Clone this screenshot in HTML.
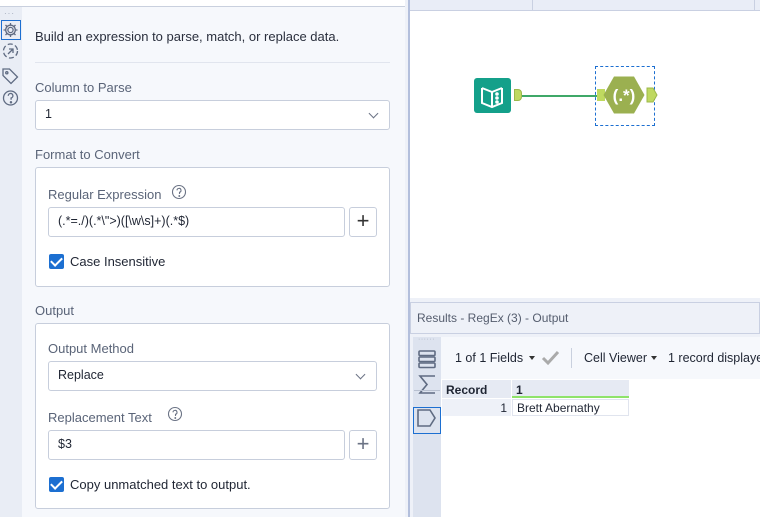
<!DOCTYPE html>
<html><head><meta charset="utf-8"><style>
*{box-sizing:border-box;margin:0;padding:0}
body{width:760px;height:517px;position:relative;overflow:hidden;background:#fff;font-family:"Liberation Sans",sans-serif;font-size:13px;color:#1f2533}
.a{position:absolute}
.lbl{position:absolute;color:#5a6478;font-size:13px}
.box{position:absolute;background:#fff;border:1px solid #c7cedc;border-radius:3px}
.inp{position:absolute;background:#fff;border:1px solid #c7cedc;border-radius:3px;padding-left:9px;line-height:27px;font-size:12.5px}
.chev{position:absolute;right:12px;top:9px;width:7px;height:7px;border-right:1.3px solid #6b7385;border-bottom:1.3px solid #6b7385;transform:rotate(45deg)}
.plus{position:absolute;background:#fff;border:1px solid #c7cedc;border-radius:3px;text-align:center;font-size:22px;line-height:26px;color:#333}
.cb{position:absolute;width:15px;height:15px;background:#1c6fd1;border-radius:2px}
.cb:after{content:"";position:absolute;left:4px;top:1px;width:5px;height:9px;border-right:2px solid #fff;border-bottom:2px solid #fff;transform:rotate(45deg)}
</style></head><body>
<div class="a" style="left:0;top:0;width:405px;height:7px;background:#fff;border-bottom:1px solid #c9d0de"></div>
<div class="a" style="left:0;top:7px;width:22px;height:510px;background:#e9edf5"></div>
<div class="a" style="left:22px;top:7px;width:383px;height:510px;background:#f6f8fc"></div>
<div class="a" style="left:4px;top:9px;color:#9aa3b5;font-size:8px;letter-spacing:1px">···</div>
<div class="a" style="left:1px;top:20px;width:20px;height:20px;border:1px solid #1c6fd1"></div>
<svg class="a" style="left:0;top:0" width="22" height="110" fill="none" stroke="#5f6b82" stroke-width="1.3">
<circle cx="10.5" cy="30" r="2.6"/><path d="M10.5 23v2.5M10.5 34.5V37M3.5 30H6M15 30h2.5M5.5 25l1.8 1.8M13.7 33.2l1.8 1.8M5.5 35l1.8-1.8M13.7 26.8l1.8-1.8"/><circle cx="10.5" cy="30" r="4.8"/>
<circle cx="10.5" cy="51" r="7" stroke-dasharray="5 2.5"/><path d="M8 54l5-5M9 49h4v4"/>
<path d="M3 69v6.5l8 8 6.5-6.5-8-8z"/><circle cx="6.8" cy="72.8" r="1.1"/>
<circle cx="10.5" cy="98" r="7"/><path d="M8.3 95.8a2.3 2.3 0 1 1 2.8 2.2v1.8"/><circle cx="11" cy="102.3" r=".6" fill="#5f6b82"/>
</svg>
<div class="a" style="left:35px;top:29px;font-size:13px;color:#2a2f3d">Build an expression to parse, match, or replace data.</div>
<div class="a" style="left:35px;top:62px;width:355px;height:1px;background:#e1e5ee"></div>
<div class="lbl" style="left:35px;top:80px">Column to Parse</div>
<div class="inp" style="left:35px;top:100px;width:355px;height:30px">1<div class="chev"></div></div>
<div class="lbl" style="left:35px;top:147px">Format to Convert</div>
<div class="box" style="left:35px;top:167px;width:355px;height:120px"></div>
<div class="lbl" style="left:48px;top:187px">Regular Expression</div>
<svg class="a" style="left:171px;top:184px" width="16" height="16" fill="none" stroke="#6b7385" stroke-width="1.1"><circle cx="8" cy="8" r="6.5"/><path d="M6 6.3a2 2 0 1 1 2.5 2V10"/><circle cx="8.3" cy="12" r=".4"/></svg>
<div class="inp" style="left:48px;top:207px;width:297px;height:30px">(.*=./)(.*\"&gt;)([\w\s]+)(.*$)</div>
<div class="plus" style="left:349px;top:207px;width:28px;height:30px">+</div>
<div class="cb" style="left:49px;top:254px"></div>
<div class="a" style="left:70px;top:254px;font-size:13px">Case Insensitive</div>
<div class="lbl" style="left:35px;top:303px">Output</div>
<div class="box" style="left:35px;top:323px;width:355px;height:186px"></div>
<div class="lbl" style="left:48px;top:341px">Output Method</div>
<div class="inp" style="left:48px;top:361px;width:329px;height:30px">Replace<div class="chev"></div></div>
<div class="lbl" style="left:48px;top:410px">Replacement Text</div>
<svg class="a" style="left:167px;top:406px" width="16" height="16" fill="none" stroke="#6b7385" stroke-width="1.1"><circle cx="8" cy="8" r="6.5"/><path d="M6 6.3a2 2 0 1 1 2.5 2V10"/><circle cx="8.3" cy="12" r=".4"/></svg>
<div class="inp" style="left:48px;top:430px;width:297px;height:30px">$3</div>
<div class="plus" style="left:349px;top:430px;width:28px;height:30px;color:#6b7385">+</div>
<div class="cb" style="left:49px;top:477px"></div>
<div class="a" style="left:70px;top:477px;font-size:13px">Copy unmatched text to output.</div>
<div class="a" style="left:405px;top:0;width:3px;height:517px;background:#eef1f8"></div>
<div class="a" style="left:408px;top:0;width:2px;height:517px;background:#b3bfdc"></div>
<div class="a" style="left:410px;top:0;width:350px;height:11px;background:#e9edf7;border-bottom:1px solid #c9d0e2"></div>
<div class="a" style="left:532px;top:0;width:1px;height:11px;background:#c9d0e2"></div>
<div class="a" style="left:754px;top:0;width:1px;height:11px;background:#c9d0e2"></div>
<div class="a" style="left:474px;top:78px;width:37px;height:35px;background:#14a08a;border-radius:3px"></div>
<svg class="a" style="left:474px;top:78px" width="37" height="35" fill="none" stroke="#fff" stroke-width="2"><path d="M8 10v15l10 4 10-4V10M18 14v15M8 10l10 4M28 10l-10 4"/><circle cx="23" cy="16" r=".8" fill="#fff"/><circle cx="23" cy="20" r=".8" fill="#fff"/><circle cx="23" cy="24" r=".8" fill="#fff"/></svg>
<div class="a" style="left:514px;top:89px;width:8px;height:12px;background:#bfd960;border:1px solid #9cb84a;border-radius:0 4px 4px 0"></div>
<div class="a" style="left:522px;top:95px;width:80px;height:2px;background:#3fa868"></div>
<div class="a" style="left:595px;top:66px;width:60px;height:60px;border:1px dashed #1c6fd1"></div>
<div class="a" style="left:597px;top:89px;width:8px;height:12px;background:#bfd960"></div>
<svg class="a" style="left:603px;top:76px" width="42" height="38"><polygon points="11,0.5 31,0.5 41.5,19 31,37.5 11,37.5 0.5,19" fill="#9bb050"/><text x="21" y="25" text-anchor="middle" fill="#fff" font-family="Liberation Sans" font-weight="bold" font-size="17">(.*)</text></svg>
<svg class="a" style="left:646px;top:87px" width="12" height="16"><path d="M1 1h6l4 7-4 7H1z" fill="#bfd960" stroke="#9cb84a"/></svg>
<div class="a" style="left:410px;top:298px;width:350px;height:219px;background:#eef1f8"></div>
<div class="a" style="left:410px;top:302px;width:350px;height:32px;border:1px solid #c9d0e2;background:#eef1f8"></div>
<div class="a" style="left:417px;top:311px;font-size:12px;color:#555d6e">Results - RegEx (3) - Output</div>
<div class="a" style="left:413px;top:337px;width:28px;height:180px;background:#dde3ef"></div>
<div class="a" style="left:441px;top:337px;width:319px;height:180px;background:#fff"></div>
<div class="a" style="left:441px;top:337px;width:319px;height:42px;background:#f6f8fc"></div>
<div class="a" style="left:418px;top:336px;color:#a5adbd;font-size:7px;letter-spacing:.5px">······</div>
<svg class="a" style="left:413px;top:346px" width="28" height="90" fill="none" stroke="#5f6b82" stroke-width="1.6"><rect x="6" y="5" width="16" height="4.5" rx="1"/><rect x="6" y="11" width="16" height="4.5" rx="1"/><rect x="6" y="17" width="16" height="4.5" rx="1"/><path d="M22 30H7l7 8.5-7 8.5h15"/><path d="M5 64h12l5 8-5 8H5z"/></svg>
<div class="a" style="left:414px;top:390px;width:26px;height:1px;background:#b8c0d0"></div>
<div class="a" style="left:413px;top:407px;width:28px;height:27px;border:1px solid #1c6fd1"></div>
<div class="a" style="left:455px;top:351px;font-size:12.5px">1 of 1 Fields</div>
<div class="a" style="left:529px;top:356px;border:3.5px solid transparent;border-top:4px solid #333"></div>
<svg class="a" style="left:541px;top:350px" width="20" height="16"><path d="M2 8l5 5 10-11" fill="none" stroke="#aaa" stroke-width="3"/></svg>
<div class="a" style="left:571px;top:348px;width:1px;height:20px;background:#c9d0de"></div>
<div class="a" style="left:584px;top:351px;font-size:12.5px">Cell Viewer</div>
<div class="a" style="left:651px;top:356px;border:3.5px solid transparent;border-top:4px solid #333"></div>
<div class="a" style="left:668px;top:351px;font-size:12.5px;white-space:nowrap">1 record displayed</div>
<div class="a" style="left:442px;top:380px;width:69px;height:18px;background:#e6eaf3;font-weight:bold;font-size:12px;padding:3px 4px">Record</div>
<div class="a" style="left:512px;top:380px;width:117px;height:18px;background:#e6eaf3;font-weight:bold;font-size:12px;padding:3px 4px;border-bottom:2px solid #8fe36a">1</div>
<div class="a" style="left:442px;top:399px;width:69px;height:17px;background:#eef1f8;font-size:12px;padding:2px 4px;text-align:right">1</div>
<div class="a" style="left:512px;top:399px;width:117px;height:17px;background:#fff;border:1px solid #e0e4ee;font-size:12px;padding:1px 4px">Brett Abernathy</div>
</body></html>
